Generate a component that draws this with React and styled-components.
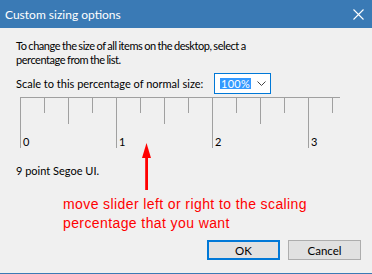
import React from "react";
import styled, { createGlobalStyle } from "styled-components";

const GlobalStyle = createGlobalStyle`
  html, body {
    margin: 0;
    padding: 0;
    background: #f0f0f0;
  }
  body {
    font-family: Lato, "Noto Sans", sans-serif;
    font-size: 11px;
    color: #000;
  }
`;

const Window = styled.div`
  width: 372px;
  height: 274px;
  display: flex;
  flex-direction: column;
  background: #f0f0f0;
  overflow: hidden;
`;

const TitleBar = styled.div`
  height: 28px;
  flex-shrink: 0;
  background: #3a7ab5;
  color: #fff;
  display: flex;
  align-items: center;
  justify-content: space-between;
  padding: 0 8px 0 5px;
  font-size: 12px;
`;

const Body = styled.div`
  position: relative;
  flex: 1;
  display: flex;
  flex-direction: column;
  border-bottom: 1px solid #3a7ab5;
  padding: 0 0 13px;
`;

const Intro = styled.p`
  margin: 11px 0 0 16px;
  line-height: 14px;
  letter-spacing: -0.45px;
  word-spacing: -0.5px;
`;

const ScaleRow = styled.div`
  display: flex;
  align-items: center;
  margin: 6px 0 0 16px;
`;

const ScaleLabel = styled.span`
  width: 198px;
  white-space: nowrap;
`;

const Combo = styled.div`
  width: 46px;
  height: 19px;
  border: 1px solid #0078d7;
  background: #fff;
  display: flex;
  align-items: center;
  justify-content: space-between;
  padding: 0 4px 0 5px;
  box-sizing: content-box;
`;

const Selected = styled.span`
  background: #3399ff;
  color: #fff;
  line-height: 11px;
  padding: 0 1px;
  letter-spacing: 0.3px;
`;

const Ruler = styled.div`
  width: 320px;
  height: 50px;
  margin: 3px 0 0 20px;
  border-top: 1px solid #a0a0a0;
  display: flex;
`;

const Cell = styled.div`
  width: ${(p) => (p.$last ? 8 : 24)}px;
  flex-shrink: 0;
  display: flex;
  align-items: flex-start;
`;

const Tick = styled.div`
  width: 1px;
  height: ${(p) => p.$len}px;
  background: #a0a0a0;
`;

const TickLabel = styled.span`
  align-self: flex-end;
  margin-left: 2px;
  line-height: 14px;
  margin-bottom: -1px;
`;

const FontNote = styled.div`
  margin: 15px 0 0 16px;
  line-height: 15px;
`;

const Annotation = styled.div`
  margin: 17px 0 0 63px;
  color: #ff0000;
  font-family: "Liberation Sans", Arial, sans-serif;
  font-size: 14px;
  line-height: 19px;
  letter-spacing: 0.4px;
  width: 262px;
`;

const Arrow = styled.svg`
  position: absolute;
  left: 142px;
  top: 115px;
`;

const Buttons = styled.div`
  margin-top: auto;
  display: flex;
  justify-content: flex-end;
  gap: 8px;
  padding-right: 11px;
`;

const Button = styled.button`
  width: 73px;
  height: 20px;
  box-sizing: border-box;
  background: #e1e1e1;
  border: ${(p) => (p.$default ? "2px solid #0078d7" : "1px solid #adadad")};
  font-family: inherit;
  font-size: 11.5px;
  padding: 0;
  color: #000;
`;

const tickLength = (i) => (i % 4 === 0 ? 50 : i % 2 === 0 ? 26 : 15);

export default function App() {
  const ticks = Array.from({ length: 14 }, (_, i) => i);
  return (
    <>
      <GlobalStyle />
      <Window>
        <TitleBar>
          <span>Custom sizing options</span>
          <svg width="11" height="11" viewBox="0 0 11 11">
            <path d="M0.5 0.5 L10.5 10.5 M10.5 0.5 L0.5 10.5" stroke="#fff" strokeWidth="1.1" />
          </svg>
        </TitleBar>
        <Body>
          <Intro>
            To change the size of all items on the desktop, select a
            <br />
            percentage from the list.
          </Intro>
          <ScaleRow>
            <ScaleLabel>Scale to this percentage of normal size:</ScaleLabel>
            <Combo>
              <Selected>100%</Selected>
              <svg width="9" height="5" viewBox="0 0 9 5">
                <path d="M0.5 0.5 L4.5 4.5 L8.5 0.5" fill="none" stroke="#444" strokeWidth="1" />
              </svg>
            </Combo>
          </ScaleRow>
          <Ruler>
            {ticks.map((i) => (
              <Cell key={i} $last={i === ticks.length - 1}>
                <Tick $len={tickLength(i)} />
                {i % 4 === 0 && <TickLabel>{i / 4}</TickLabel>}
              </Cell>
            ))}
          </Ruler>
          <FontNote>9 point Segoe UI.</FontNote>
          <Annotation>
            move slider left or right to the scaling percentage that you want
          </Annotation>
          <Arrow width="10" height="48" viewBox="0 0 10 48">
            <path d="M4.5 0 L0 15 L9 15 Z" fill="#ff0000" />
            <rect x="3.2" y="14" width="2.8" height="33" fill="#ff0000" />
          </Arrow>
          <Buttons>
            <Button $default>OK</Button>
            <Button>Cancel</Button>
          </Buttons>
        </Body>
      </Window>
    </>
  );
}
